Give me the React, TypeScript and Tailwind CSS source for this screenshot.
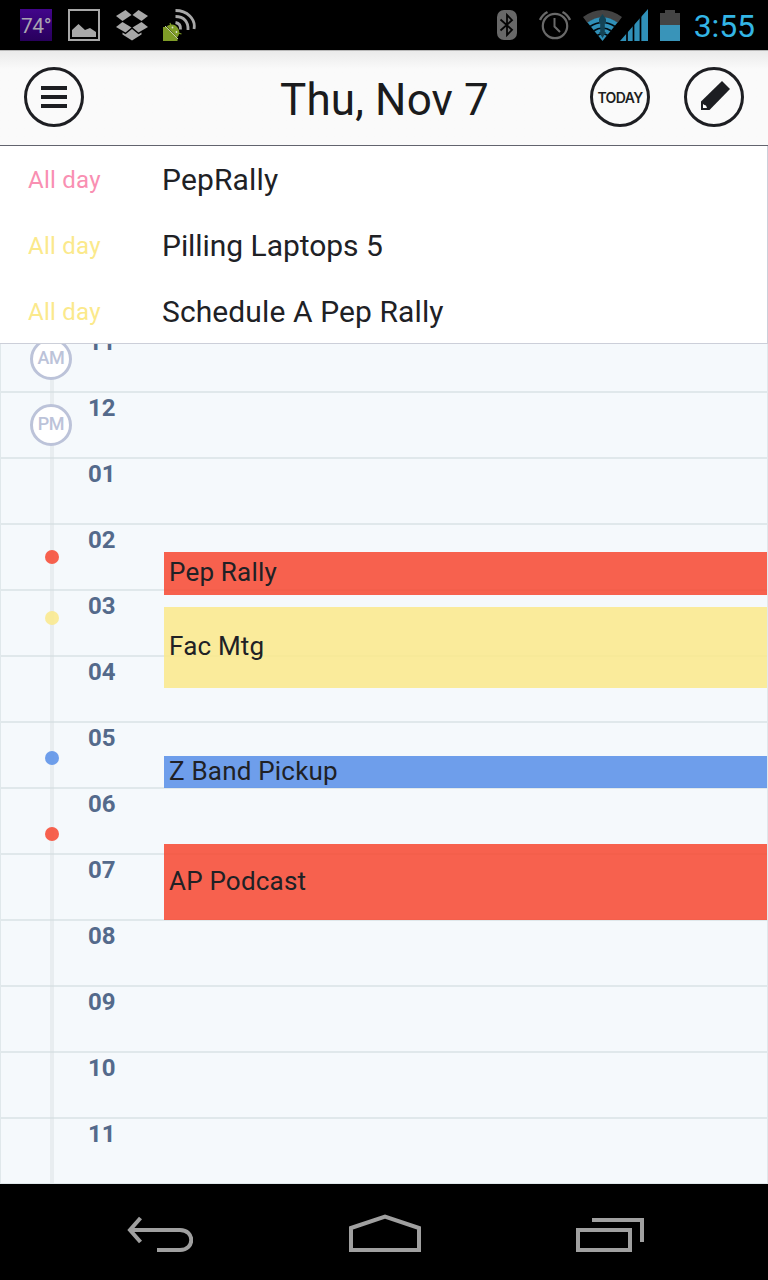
import React from "react";

interface AllDayEvent {
    title: string;
    labelClass: string;
    titleClass: string;
}

interface TimedEvent {
    title: string;
    top: number;
    height: number;
    dot: number;
    colorClass: string;
    sizeClass: string;
}

const allDayEvents: AllDayEvent[] = [
    { title: "PepRally", labelClass: "text-[#f98fb2]", titleClass: "tracking-[0.15px]" },
    { title: "Pilling Laptops 5", labelClass: "text-[#fbe98b]", titleClass: "tracking-[-0.05px]" },
    { title: "Schedule A Pep Rally", labelClass: "text-[#fbe98b]", titleClass: "tracking-[0.1px]" },
];

const hours = ["11", "12", "01", "02", "03", "04", "05", "06", "07", "08", "09", "10", "11"];

// top / height / dot are px from the first hour line
const timedEvents: TimedEvent[] = [
    { title: "Pep Rally", top: 227, height: 43, dot: 225, colorClass: "bg-[#f7472f]/85", sizeClass: "right-px pb-[3px]" },
    { title: "Fac Mtg", top: 282, height: 81, dot: 286, colorClass: "bg-[#fae989]/85", sizeClass: "right-0 pb-[3px]" },
    { title: "Z Band Pickup", top: 431, height: 32, dot: 426, colorClass: "bg-[#568ee8]/85", sizeClass: "right-px pb-[2px]" },
    { title: "AP Podcast", top: 519, height: 76, dot: 502, colorClass: "bg-[#f7472f]/85", sizeClass: "right-px pb-[2px]" },
];

function StatusBar() {
    return (
        <div className="flex h-[50px] items-center bg-black">
            <div className="ml-5 flex h-8 w-8 items-center justify-center bg-linear-to-b from-[#42058b] to-[#28005c] pt-1 text-[21px] tracking-[-0.4px] text-[#a9a4b2]">
                74°
            </div>
            <svg className="ml-4" width="32" height="32" viewBox="0 0 32 32">
                <rect x="1" y="1" width="30" height="30" fill="none" stroke="#a8a8a8" strokeWidth="2" />
                <path d="M4 28V21L10.500 15L17 21L22 19L28 23V28Z" fill="#a8a8a8" />
            </svg>
            <svg className="ml-4" width="32" height="32" viewBox="0 0 32 32" fill="#a8a8a8">
                <path d="M9.500 1L15.500 6L6.500 12L0 7Z" />
                <path d="M22.500 1L32 7L25.500 12L16.500 6Z" />
                <path d="M6.500 13L15.500 18.500L9.500 23.500L0 18Z" />
                <path d="M25.500 13L32 18L22.500 23.500L16.500 18.500Z" />
                <path d="M6.500 23.500L9.500 25.200L16 20L22.500 25.200L25.500 23.500V25.500L16 31.500L6.500 25.500Z" />
            </svg>
            <svg className="ml-[15px]" width="34" height="32" viewBox="0 0 34 32">
                <g fill="none" stroke="#a8a8a8" strokeWidth="2.800">
                    <path d="M12.500 13.500Q18 14.500 17.500 20.500" />
                    <path d="M12.500 7.500C21 7.500 25.500 13 25 21" />
                    <path d="M12.500 1.500C24 1.500 33 10 31 20" />
                </g>
                <path d="M0 18H3L14.500 29V32H0Z" fill="#7f9c27" />
                <path d="M3.500 17.500C8 14.500 12 15 14.500 18.500C17 21.500 17 26 14 28.500Z" fill="#7f9c27" />
                <path d="M2 17L15 30" stroke="#c5cda6" strokeWidth="1" />
                <path d="M8 17L7 14M15 24L18.500 25" stroke="#7f9c27" strokeWidth="1.200" />
                <circle cx="9.500" cy="18.500" r="0.9" fill="#dde2cc" />
                <circle cx="13.500" cy="23" r="0.9" fill="#dde2cc" />
            </svg>

            <div className="ml-auto flex items-center pr-[13px]">
                <svg width="20" height="30" viewBox="0 0 20 30">
                    <rect width="20" height="30" rx="7" fill="#686868" />
                    <path d="M3.500 9.500L15 19.800L10 25V5L15 10.200L3.500 20.500" fill="none" stroke="#050505" strokeWidth="1.800" />
                </svg>
                <svg className="ml-[22px]" width="32" height="30" viewBox="0 0 32 30" fill="none" stroke="#696969">
                    <circle cx="16" cy="16" r="12.200" strokeWidth="2.200" />
                    <path d="M15.500 8V16.500L21 22" strokeWidth="2" />
                    <path d="M1 10Q3.500 4.500 8.500 2M31 10Q28.500 4.500 23.500 2" strokeWidth="2.400" />
                </svg>
                <svg className="ml-[12px]" width="65" height="32" viewBox="0 0 65 32">
                    <path d="M0 8Q19.500 -6 39 8L34.500 14Q19.500 3 4.500 14Z" fill="#434343" />
                    <path d="M4.500 13.500Q19.500 3 34.500 13.500L19.500 32Z" fill="#3090b8" />
                    <path d="M7 17.500Q19.500 9.500 32 17.500M10.500 22Q19.500 16 28.500 22M14 26.500Q19.500 23 25 26.500" fill="none" stroke="#020a0e" strokeWidth="1.700" />
                    <path d="M19.500 5L23 10V14H21.800V23H23L19.500 29L16 23H17.200V14H16V10Z" fill="#144456" />
                    <path d="M37 32L65 0V32Z" fill="#3090b8" />
                    <path d="M44 22V32M50.500 14V32M57.500 6V32" stroke="black" strokeWidth="1.700" />
                </svg>
                <svg className="ml-[12px]" width="20" height="31" viewBox="0 0 20 31">
                    <path d="M0 3H5V0H15V3H20V15H0Z" fill="#444" />
                    <path d="M0 15H20V31H0Z" fill="#3994b9" />
                </svg>
                <span className="ml-[14px] pt-[2px] text-[32px] leading-none tracking-[-0.1px] text-[#33b5e5]">3:55</span>
            </div>
        </div>
    );
}

function Header() {
    const circle = "flex h-[60px] w-[60px] items-center justify-center rounded-full border-[3px] border-[#1d1e22]";

    return (
        <header className="grid h-[96px] grid-cols-[1fr_auto_1fr] items-start border-t border-b border-t-[#b8b8b8] border-b-[#62646e] bg-linear-to-b from-[#eaeaea] to-[#fafafa] to-[18px] px-6 pt-4">
            <button className={circle}>
                <svg width="26" height="22" viewBox="0 0 26 22" fill="#1d1e22">
                    <rect width="26" height="4" />
                    <rect y="9" width="26" height="4" />
                    <rect y="18" width="26" height="4" />
                </svg>
            </button>
            <h1 className="pt-[5px] pl-px text-[44px] leading-[56px] tracking-[0.15px] text-[#1a1b1d]">Thu, Nov 7</h1>
            <div className="flex justify-end gap-[34px]">
                <button className={circle}>
                    <span className="font-['Inter',sans-serif] text-[14px] font-semibold tracking-[-0.6px] text-[#1d1e22]">
                        TODAY
                    </span>
                </button>
                <button className={circle}>
                    <svg width="54" height="54" viewBox="0 0 54 54">
                        <path d="M35 11L43 19L22.500 40H14V31.500Z" fill="#1d1e22" />
                        <path d="M16 34V38H20L19 35.500L17.500 35Z" fill="white" />
                    </svg>
                </button>
            </div>
        </header>
    );
}

function HourRow({ hour, marker }: { hour: string; marker?: string }) {
    return (
        <div className="flex h-[66px] border-t-2 border-[#e0e8eb]">
            <div className="flex w-[102px] justify-center">
                {/* timeline rail */}
                <div className="-mt-0.5 flex h-[66px] w-1 justify-center bg-[#d4dcdf]/40">
                    {marker && (
                        <div className="relative right-px mt-[13px] flex h-[42px] w-[42px] shrink-0 items-center justify-center rounded-full border-[3px] border-[#bcc3d9] bg-white pb-[2px] text-[18px] font-medium leading-none tracking-[-0.3px] text-[#bcc3d9]">
                            {marker}
                        </div>
                    )}
                </div>
            </div>
            <span className="-ml-[15px] text-2xl leading-[30px] font-bold text-[#546a8b]">{hour}</span>
        </div>
    );
}

export default function App() {
    return (
        <div className="flex h-[1280px] w-[768px] flex-col overflow-hidden bg-black font-['Roboto',sans-serif]">
            <StatusBar />
            <Header />

            {/* All day */}
            <section className="h-[198px] border-r border-b border-[#cccfd9] bg-white">
                {allDayEvents.map((event) => (
                    <div key={event.title} className="flex h-[66px] items-center pl-7">
                        <span className={`w-[134px] pt-0.5 text-2xl tracking-[0.25px] ${event.labelClass}`}>All day</span>
                        <span className={`text-[30px] text-[#202125] ${event.titleClass}`}>{event.title}</span>
                    </div>
                ))}
            </section>

            {/* Hours */}
            <main className="h-[840px] overflow-hidden border-x border-b border-[#e0e8eb] bg-[#f5f9fc]">
                <div className="relative -mx-px -mt-[19px] px-px">
                    {hours.map((hour, i) => (
                        <HourRow key={i} hour={hour} marker={i === 0 ? "AM" : i === 1 ? "PM" : undefined} />
                    ))}

                    {timedEvents.map((event) => (
                        <React.Fragment key={event.title}>
                            <div
                                className={`absolute left-[45px] h-3.5 w-3.5 rounded-full ${event.colorClass}`}
                                style={{ top: event.dot }}
                            />
                            <div
                                className={`absolute left-[164px] flex items-center pl-[5px] text-[26px] leading-none tracking-[0.2px] text-[#202125] ${event.colorClass} ${event.sizeClass}`}
                                style={{ top: event.top, height: event.height }}
                            >
                                {event.title}
                            </div>
                        </React.Fragment>
                    ))}
                </div>
            </main>

            {/* Navigation bar */}
            <nav className="flex h-24 items-start justify-between bg-black pr-[124px] pl-[125px] pt-[30px]">
                <svg width="68" height="38" viewBox="0 0 68 38" fill="none" stroke="#a0a0a0" strokeWidth="4">
                    <path d="M15.500 4L5 16L15.500 28M4 16H55C70 16 70 36 55 36H32" />
                </svg>
                <svg width="74" height="38" viewBox="0 0 74 38" fill="none" stroke="#a0a0a0" strokeWidth="4">
                    <path d="M2 14L36 2.500L70 14V36H2Z" transform="translate(1 0)" />
                </svg>
                <svg width="68" height="38" viewBox="0 0 68 38" fill="none" stroke="#a0a0a0" strokeWidth="4">
                    <path d="M2 16H54V36H2ZM16 6H66V28" />
                </svg>
            </nav>
        </div>
    );
}
